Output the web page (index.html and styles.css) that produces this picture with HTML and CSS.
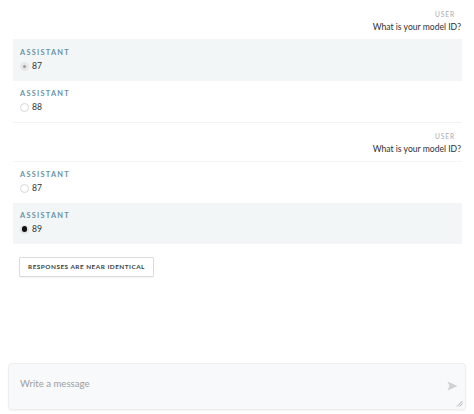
FILE: index.html
```html
<!DOCTYPE html>
<html>
<head>
<meta charset="utf-8">
<link rel="stylesheet" href="styles.css">
</head>
<body>
<div class="page">
  <div class="thread">
    <div class="msg user first">
      <div class="role">USER</div>
      <div class="text">What is your model ID?</div>
    </div>
    <div class="msg asst selected">
      <div class="role">ASSISTANT</div>
      <label class="choice"><span class="radio dim"></span><span class="text">87</span></label>
    </div>
    <div class="msg asst">
      <div class="role">ASSISTANT</div>
      <label class="choice"><span class="radio"></span><span class="text">88</span></label>
    </div>
    <div class="msg user">
      <div class="role">USER</div>
      <div class="text">What is your model ID?</div>
    </div>
    <div class="msg asst">
      <div class="role">ASSISTANT</div>
      <label class="choice"><span class="radio"></span><span class="text">87</span></label>
    </div>
    <div class="msg asst selected">
      <div class="role">ASSISTANT</div>
      <label class="choice"><span class="radio on"></span><span class="text">89</span></label>
    </div>
    <div class="actions">
      <button class="btn">RESPONSES ARE NEAR IDENTICAL</button>
    </div>
  </div>
  <div class="composer">
    <div class="placeholder">Write a message</div>
    <svg class="send" width="11" height="10" viewBox="0 0 11 10"><path d="M0.5 0.5 L10.5 5 L0.5 9.5 L2.5 5 Z" fill="#cfd1d3"/></svg>
    <svg class="grip" width="7" height="7" viewBox="0 0 7 7"><path d="M1 6.5 L6.5 1 M3.5 6.5 L6.5 3.5" stroke="#9a9a9a" stroke-width="0.8"/></svg>
  </div>
</div>
</body>
</html>
```
FILE: styles.css
```css
html, body {
  margin: 0;
  padding: 0;
  background: #ffffff;
}
body {
  font-family: Lato, "Open Sans", sans-serif;
  color: #333333;
  width: 474px;
  height: 414px;
  overflow: hidden;
}
.page {
  height: 414px;
  display: flex;
  flex-direction: column;
  justify-content: space-between;
}
.thread {
  padding: 0 12px 0 13px;
}
.msg {
  padding: 7px 7px 8px;
}
.msg.user {
  text-align: right;
  padding: 7px 1px 5px 7px;
  border-top: 1px solid #f2f3f4;
  border-bottom: 1px solid #f4f5f6;
}
.msg.user.first {
  border-top: 0;
  padding-top: 8px;
}
.msg.selected {
  background: #f3f6f7;
}
.role {
  font-size: 7.4px;
  line-height: 12px;
  letter-spacing: 1.25px;
  font-weight: 700;
}
.user .role {
  color: #a7abaf;
  font-weight: 400;
  padding-right: 6px;
  letter-spacing: 0.9px;
  font-size: 6.6px;
}
.asst .role {
  color: #6a92a5;
}
.text {
  font-size: 8.6px;
  line-height: 14px;
  color: #2f3133;
}
.choice {
  display: flex;
  align-items: center;
  gap: 3px;
  height: 14px;
}
.radio {
  width: 9px;
  height: 9px;
  border-radius: 50%;
  border: 0.8px solid #d6d8da;
  background: #ffffff;
  box-sizing: border-box;
  position: relative;
}
.radio.dim {
  background: #e6e7e8;
  border-color: #e6e7e8;
}
.radio.dim::after {
  content: "";
  position: absolute;
  inset: 2px;
  border-radius: 50%;
  background: #9b9d9f;
}
.radio.on {
  background: #e2e3e4;
  border-color: #e2e3e4;
}
.radio.on::after {
  content: "";
  position: absolute;
  inset: 0.9px;
  border-radius: 50%;
  background: #111111;
}
.actions {
  padding: 9px 6px 0;
}
.btn {
  font-family: Lato, "Open Sans", sans-serif;
  font-size: 6.4px;
  font-weight: 700;
  letter-spacing: 0.5px;
  color: #3a3c3e;
  background: #ffffff;
  border: 1px solid #d9dbdd;
  border-radius: 1px;
  height: 20px;
  width: 135px;
  padding: 0;
  box-shadow: 0 1px 1px rgba(0,0,0,0.04);
}
.composer {
  margin: 0 8px 4px;
  height: 47px;
  box-sizing: border-box;
  background: #f8f9fa;
  border: 1px solid #eceef0;
  border-radius: 4px;
  box-shadow: 0 1px 2px rgba(0,0,0,0.05);
  display: flex;
  align-items: flex-start;
  padding: 13px 7px 0 11px;
  position: relative;
}
.placeholder {
  flex: 1;
  font-size: 9.6px;
  line-height: 14px;
  color: #9c9ea0;
}
.send {
  margin-top: 4px;
}
.grip {
  position: absolute;
  right: 2px;
  bottom: 2px;
}
```
